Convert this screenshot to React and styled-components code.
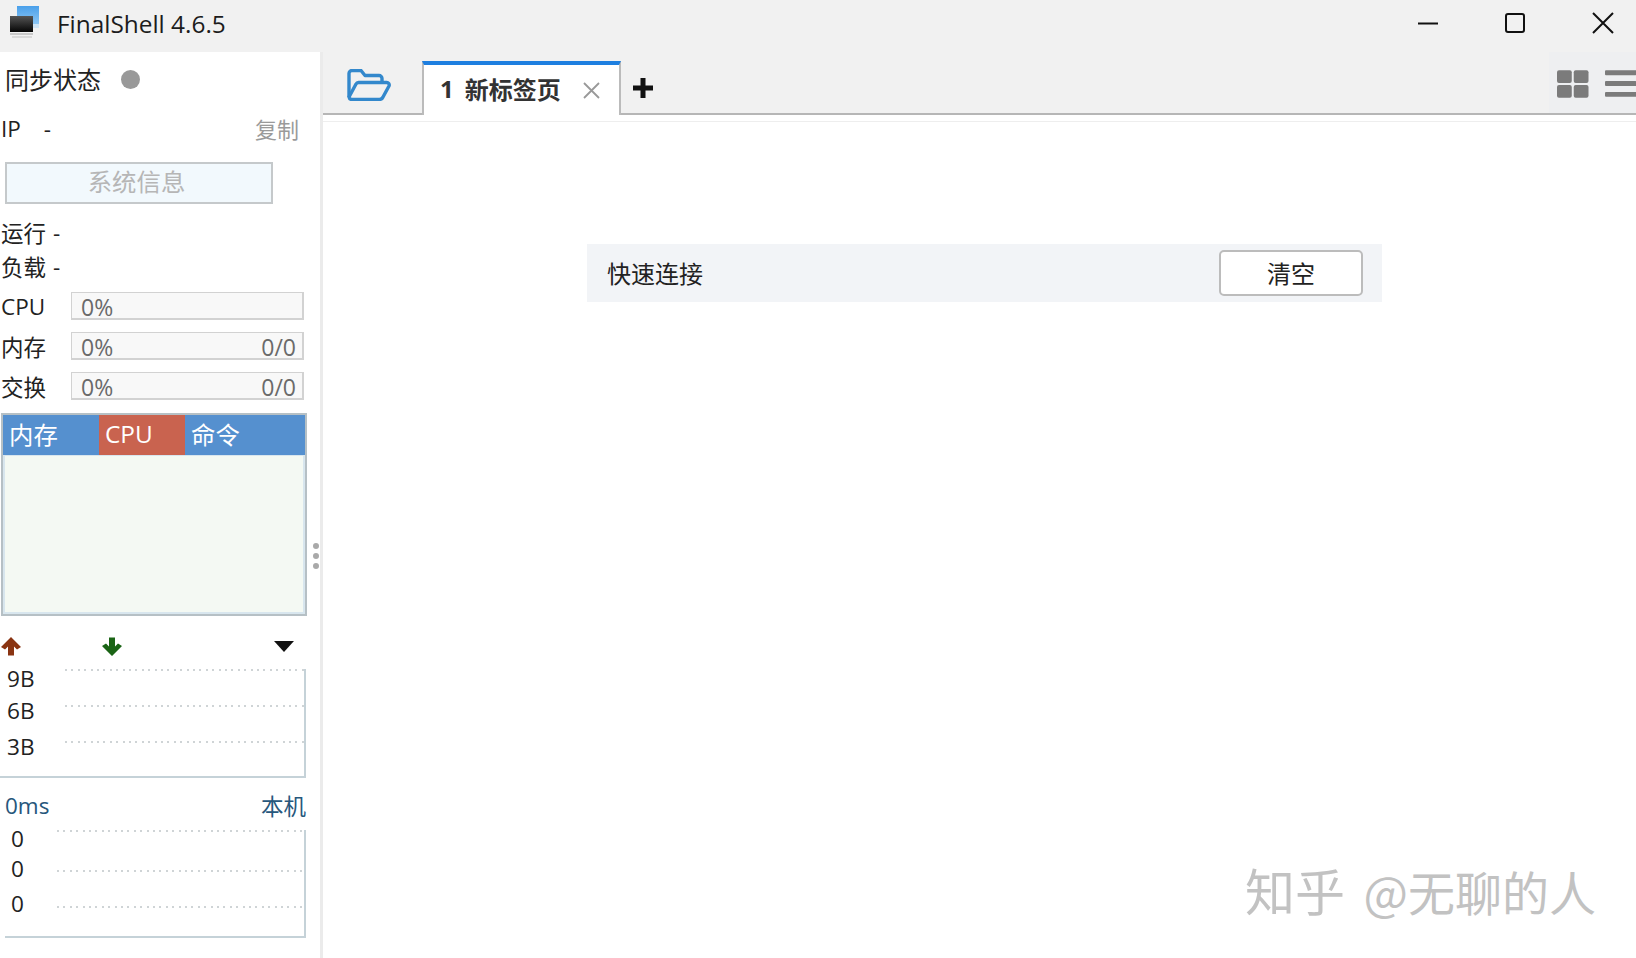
import styled, { createGlobalStyle } from "styled-components";

const GlobalStyle = createGlobalStyle`
  html, body {
    margin: 0;
    padding: 0;
    background: #fff;
    overflow: hidden;
  }
  * { box-sizing: border-box; }
`;

const Window = styled.div`
  width: 1636px;
  height: 958px;
  display: flex;
  flex-direction: column;
  font-family: "Open Sans", "Noto Sans CJK SC", sans-serif;
  color: #222;
  overflow: hidden;
`;

const TitleBar = styled.div`
  height: 52px;
  flex: none;
  background: #f1f1f1;
  display: flex;
  align-items: center;
  padding: 0 0 6px 9px;
`;
const AppTitle = styled.div`
  font-size: 24.4px;
  margin-left: 16px;
  color: #1c1c1c;
`;
const WinControls = styled.div`
  margin-left: auto;
  display: flex;
  align-items: center;
  gap: 67px;
  padding-right: 22px;
`;

const Body = styled.div`
  flex: 1;
  display: flex;
  min-height: 0;
`;

const Sidebar = styled.div`
  position: relative;
  width: 323px;
  flex: none;
  background: #fff;
  border-right: 3px solid #ebebeb;
  display: flex;
  flex-direction: column;
`;
const SyncRow = styled.div`
  height: 56px;
  display: flex;
  align-items: center;
  padding: 0 0 3px 5px;
  font-size: 24px;
`;
const SyncDot = styled.span`
  width: 19px;
  height: 19px;
  border-radius: 50%;
  background: #999;
  margin: 1px 0 0 20px;
`;
const IpRow = styled.div`
  height: 44px;
  display: flex;
  align-items: center;
  padding: 0 21px 4px 1px;
  font-size: 22.5px;
`;
const IpValue = styled.span`
  margin-left: 23px;
`;
const CopyLink = styled.span`
  margin-left: auto;
  color: #9a9a9a;
  font-size: 22px;
`;
const SysInfoButton = styled.div`
  width: 268px;
  height: 42px;
  margin: 10px 0 15px 5px;
  flex: none;
  border: 2px solid #c5c9cb;
  background: #f2f9fd;
  color: #b6b6b6;
  font-size: 24.4px;
  display: flex;
  align-items: center;
  justify-content: center;
  padding: 0 5px 6px 0;
`;
const InfoRow = styled.div`
  height: 33px;
  display: flex;
  align-items: center;
  padding: 0 0 ${(p) => p.$lift}px 1px;
  font-size: 22.5px;
`;
const InfoValue = styled.span`
  margin-left: 7px;
`;
const Meters = styled.div`
  margin-top: 7px;
  display: flex;
  flex-direction: column;
  gap: 12px;
`;
const MeterRow = styled.div`
  height: 28px;
  display: flex;
  align-items: center;
  padding-left: 1px;
  font-size: 22.5px;
`;
const MeterLabel = styled.span`
  width: 70px;
  flex: none;
`;
const MeterBar = styled.div`
  width: 233px;
  height: 28px;
  background: #f8f8f8;
  border: 1px solid #d2d2d2;
  border-bottom-width: 2px;
  border-right-width: 2px;
  display: flex;
  align-items: center;
  justify-content: space-between;
  padding: 2px 6px 0 9px;
  color: #6a6a6a;
  font-size: 23px;
`;
const ProcessTable = styled.div`
  width: 306px;
  height: 203px;
  margin: 13px 0 0 1px;
  flex: none;
  border: 2px solid #b6c0c5;
  display: flex;
  flex-direction: column;
`;
const ProcessHead = styled.div`
  height: 40px;
  flex: none;
  display: flex;
  background: #5590cf;
  color: #fff;
  font-size: 24.4px;
`;
const HeadCell = styled.div`
  width: ${(p) => p.$w}px;
  flex: none;
  background: ${(p) => p.$bg || "transparent"};
  padding: 0 0 3px ${(p) => p.$pad}px;
  display: flex;
  align-items: center;
`;
const ProcessBody = styled.div`
  flex: 1;
  background: #f4f9f3;
  border: 2px solid #d8e6ee;
  border-top: 1px solid #d8e6ee;
`;
const NetRow = styled.div`
  height: 26px;
  margin: 17px 0 10px;
  flex: none;
  display: flex;
  align-items: center;
  padding: 0 26px 0 1px;
`;
const DownArrow = styled.span`
  display: flex;
  margin-left: 81px;
`;
const Caret = styled.span`
  display: flex;
  margin-left: auto;
`;
const Chart = styled.div`
  margin-left: ${(p) => p.$left}px;
  width: ${(p) => 306 - p.$left}px;
  flex: none;
  border-right: 2px solid #c5d2d8;
  border-bottom: 2px solid #c5d2d8;
`;
const ChartRow = styled.div`
  height: ${(p) => p.$h}px;
  display: flex;
  align-items: flex-start;
`;
const ChartLabel = styled.span`
  width: ${(p) => p.$w}px;
  flex: none;
  padding-left: ${(p) => p.$pad}px;
  margin-top: ${(p) => p.$top}px;
  font-size: 22.6px;
  line-height: 22px;
`;
const DotLine = styled.div`
  flex: 1;
  height: 2px;
  margin-right: -2px;
  background: repeating-linear-gradient(to right, #cfd4d6 0 2px, transparent 2px 6.4px);
`;
const PingRow = styled.div`
  height: 32px;
  margin-top: 12px;
  margin-bottom: 8px;
  flex: none;
  width: 306px;
  display: flex;
  align-items: center;
  justify-content: space-between;
  padding: 0 0 2px 5px;
  color: #27577c;
  font-size: 22.5px;
`;
const SplitHandle = styled.div`
  position: absolute;
  left: 313px;
  top: 491px;
  display: flex;
  flex-direction: column;
  gap: 4px;
`;
const HandleDot = styled.span`
  width: 6px;
  height: 6px;
  border-radius: 50%;
  background: #a9a9a9;
`;

const Main = styled.div`
  flex: 1;
  min-width: 0;
  display: flex;
  flex-direction: column;
  position: relative;
`;
const TabBar = styled.div`
  height: 63px;
  flex: none;
  background: #f1f1f1;
  border-bottom: 2px solid #b6b6b6;
  display: flex;
  align-items: flex-end;
`;
const FolderButton = styled.div`
  width: 99px;
  height: 61px;
  flex: none;
  display: flex;
  align-items: center;
  padding-left: 24px;
  padding-top: 5px;
`;
const Tab = styled.div`
  width: 199px;
  height: 54px;
  margin-bottom: -2px;
  flex: none;
  background: #fff;
  border-top: 4px solid #1e7fe0;
  border-left: 2px solid #bbb;
  border-right: 2px solid #bbb;
  display: flex;
  align-items: center;
  padding: 0 0 4px 16px;
  font-size: 24px;
  font-weight: 700;
  color: #333;
`;
const TabName = styled.span`
  margin-left: 11px;
`;
const TabClose = styled.span`
  display: flex;
  margin: 4px 0 0 22px;
`;
const AddTab = styled.div`
  height: 61px;
  margin-left: 11px;
  display: flex;
  align-items: center;
  padding-top: 11px;
`;
const ViewTools = styled.div`
  margin-left: auto;
  width: 87px;
  height: 61px;
  background: #eeeff1;
  display: flex;
  align-items: center;
  gap: 16px;
  padding: 3px 0 0 8px;
`;
const Content = styled.div`
  flex: 1;
  margin-top: 6px;
  border-top: 1px solid #eeeeee;
  background: #fff;
  padding: 122px 0 0 264px;
`;
const QuickPanel = styled.div`
  width: 795px;
  height: 58px;
  background: #f2f4f7;
  display: flex;
  align-items: center;
  justify-content: space-between;
  padding: 0 19px 0 20px;
  font-size: 24px;
  color: #222;
`;
const PanelTitle = styled.span`
  padding-bottom: 2px;
`;
const ClearButton = styled.div`
  width: 144px;
  height: 46px;
  background: #fff;
  border: 2px solid #bcbcbc;
  border-radius: 5px;
  display: flex;
  align-items: center;
  justify-content: center;
  font-size: 24px;
  padding-bottom: 2px;
`;
const Watermark = styled.div`
  position: absolute;
  left: 922px;
  top: 807px;
  font-size: 47px;
  line-height: 60px;
  color: #c2c2c2;
  white-space: nowrap;
  font-family: "Noto Sans CJK SC", sans-serif;
`;
const WatermarkBrand = styled.span`
  font-size: 50px;
  margin-right: 8px;
`;

const AppLogo = () => (
  <svg width="32" height="34" viewBox="0 0 32 34">
    <defs>
      <linearGradient id="back" x1="0" y1="0" x2="0" y2="1">
        <stop offset="0" stopColor="#4aa0ea" />
        <stop offset="1" stopColor="#8cc6f4" />
      </linearGradient>
      <linearGradient id="front" x1="0" y1="0" x2="0" y2="1">
        <stop offset="0" stopColor="#555" />
        <stop offset="1" stopColor="#050505" />
      </linearGradient>
    </defs>
    <rect x="8" y="0" width="22" height="18" fill="url(#back)" />
    <rect x="24" y="18" width="6" height="4" fill="#cfe4f5" />
    <rect x="1" y="10" width="23" height="16" fill="url(#front)" />
    <rect x="1" y="27" width="23" height="2" fill="#c9c9c9" />
    <rect x="3" y="30" width="20" height="2" fill="#d9d9d9" />
  </svg>
);

const MinIcon = () => (
  <svg width="20" height="20" viewBox="0 0 20 20">
    <path d="M0 10.5H20" stroke="#111" strokeWidth="2" />
  </svg>
);
const MaxIcon = () => (
  <svg width="20" height="20" viewBox="0 0 20 20" fill="none">
    <rect x="1" y="1" width="18" height="18" rx="2" stroke="#111" strokeWidth="2" />
  </svg>
);
const CloseIcon = () => (
  <svg width="22" height="22" viewBox="0 0 22 22">
    <path d="M1 1L21 21M21 1L1 21" stroke="#111" strokeWidth="2" />
  </svg>
);
const ArrowUp = () => (
  <svg width="20" height="19" viewBox="0 0 20 19">
    <path d="M10 0L20 10L16 12.5L13 9.5V18.5H7V9.5L4 12.5L0 10Z" fill="#8a3412" />
  </svg>
);
const ArrowDown = () => (
  <svg width="20" height="19" viewBox="0 0 20 19">
    <path d="M10 19L20 9L16 6.5L13 9.5V0.5H7V9.5L4 6.5L0 9Z" fill="#1a6415" />
  </svg>
);
const CaretDown = () => (
  <svg width="20" height="11" viewBox="0 0 20 11">
    <path d="M0 0H20L10 11Z" fill="#111" />
  </svg>
);
const FolderIcon = () => (
  <svg width="44" height="32" viewBox="0 0 44 32" fill="none" stroke="#3388cc" strokeWidth="3.4" strokeLinejoin="round">
    <path d="M2 28V4.5A3 3 0 0 1 5 1.5H14L18 6.5H32A3 3 0 0 1 35 9.5V13" />
    <path d="M2 28L9 15A3 3 0 0 1 11.5 13.5H39.5A2.5 2.5 0 0 1 42 17L36 28A4 4 0 0 1 32.5 30.5H5A3 3 0 0 1 2 28Z" />
  </svg>
);
const TabCloseIcon = () => (
  <svg width="17" height="17" viewBox="0 0 17 17">
    <path d="M1 1L16 16M16 1L1 16" stroke="#999" strokeWidth="1.8" />
  </svg>
);
const PlusIcon = () => (
  <svg width="22" height="22" viewBox="0 0 22 22">
    <path d="M11 1V21M1 11H21" stroke="#111" strokeWidth="5" />
  </svg>
);
const GridIcon = () => (
  <svg width="32" height="28" viewBox="0 0 32 28" fill="#7b7b7b">
    <rect x="0" y="0" width="15" height="13" rx="2" />
    <rect x="17" y="0" width="15" height="13" rx="2" />
    <rect x="0" y="15" width="15" height="13" rx="2" />
    <rect x="17" y="15" width="15" height="13" rx="2" />
  </svg>
);
const MenuIcon = () => (
  <svg width="32" height="28" viewBox="0 0 32 28" fill="#7b7b7b">
    <rect x="0" y="0" width="32" height="5" rx="1" />
    <rect x="0" y="11" width="32" height="5" rx="1" />
    <rect x="0" y="22" width="32" height="5" rx="1" />
  </svg>
);

const meters = [
  { label: "CPU", used: "0%" },
  { label: "内存", used: "0%", total: "0/0" },
  { label: "交换", used: "0%", total: "0/0" },
];

const netRows = [
  { h: 36, label: "9B", top: -1 },
  { h: 36, label: "6B", top: -5 },
  { h: 35, label: "3B", top: -5 },
];

const pingRows = [
  { h: 40, top: -2 },
  { h: 36, top: -12 },
  { h: 30, top: -13 },
];

const App = () => (
  <Window>
    <GlobalStyle />
    <TitleBar>
      <AppLogo />
      <AppTitle>FinalShell 4.6.5</AppTitle>
      <WinControls>
        <MinIcon />
        <MaxIcon />
        <CloseIcon />
      </WinControls>
    </TitleBar>
    <Body>
      <Sidebar>
        <SyncRow>
          同步状态
          <SyncDot />
        </SyncRow>
        <IpRow>
          IP
          <IpValue>-</IpValue>
          <CopyLink>复制</CopyLink>
        </IpRow>
        <SysInfoButton>系统信息</SysInfoButton>
        <InfoRow $lift={7}>
          运行<InfoValue>-</InfoValue>
        </InfoRow>
        <InfoRow $lift={4}>
          负载<InfoValue>-</InfoValue>
        </InfoRow>
        <Meters>
          {meters.map((m) => (
            <MeterRow key={m.label}>
              <MeterLabel>{m.label}</MeterLabel>
              <MeterBar>
                <span>{m.used}</span>
                {m.total && <span>{m.total}</span>}
              </MeterBar>
            </MeterRow>
          ))}
        </Meters>
        <ProcessTable>
          <ProcessHead>
            <HeadCell $w={96} $pad={6}>内存</HeadCell>
            <HeadCell $w={86} $bg="#c9634f" $pad={6}>CPU</HeadCell>
            <HeadCell $w={120} $pad={6}>命令</HeadCell>
          </ProcessHead>
          <ProcessBody />
        </ProcessTable>
        <NetRow>
          <ArrowUp />
          <DownArrow>
            <ArrowDown />
          </DownArrow>
          <Caret>
            <CaretDown />
          </Caret>
        </NetRow>
        <Chart $left={0}>
          {netRows.map((r) => (
            <ChartRow key={r.label} $h={r.h}>
              <ChartLabel $w={65} $pad={7} $top={r.top}>{r.label}</ChartLabel>
              <DotLine />
            </ChartRow>
          ))}
        </Chart>
        <PingRow>
          <span>0ms</span>
          <span>本机</span>
        </PingRow>
        <Chart $left={5}>
          {pingRows.map((r) => (
            <ChartRow key={r.h} $h={r.h}>
              <ChartLabel $w={52} $pad={6} $top={r.top}>0</ChartLabel>
              <DotLine />
            </ChartRow>
          ))}
        </Chart>
        <SplitHandle>
          <HandleDot />
          <HandleDot />
          <HandleDot />
        </SplitHandle>
      </Sidebar>
      <Main>
        <TabBar>
          <FolderButton>
            <FolderIcon />
          </FolderButton>
          <Tab>
            1<TabName>新标签页</TabName>
            <TabClose>
              <TabCloseIcon />
            </TabClose>
          </Tab>
          <AddTab>
            <PlusIcon />
          </AddTab>
          <ViewTools>
            <GridIcon />
            <MenuIcon />
          </ViewTools>
        </TabBar>
        <Content>
          <QuickPanel>
            <PanelTitle>快速连接</PanelTitle>
            <ClearButton>清空</ClearButton>
          </QuickPanel>
        </Content>
        <Watermark>
          <WatermarkBrand>知乎</WatermarkBrand> @无聊的人
        </Watermark>
      </Main>
    </Body>
  </Window>
);

export default App;
